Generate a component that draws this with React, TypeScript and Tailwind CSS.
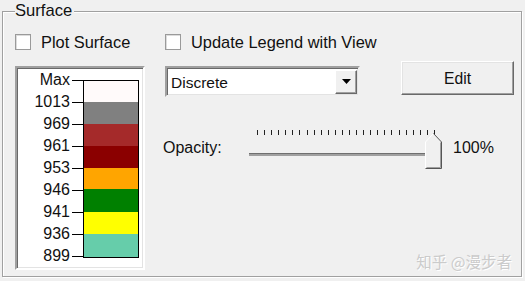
import React from "react";

const font = { fontFamily: '"Liberation Sans", Arial, sans-serif' };

// colour bands of the legend, top to bottom
const bands = [
  { h: "h-[21px]", c: "bg-[#fffafa]" },
  { h: "h-[22px]", c: "bg-[#808080]" },
  { h: "h-[22px]", c: "bg-[#a52a2a]" },
  { h: "h-[22px]", c: "bg-[#8b0000]" },
  { h: "h-[21px]", c: "bg-[#ffa500]" },
  { h: "h-[23px]", c: "bg-[#008000]" },
  { h: "h-[22px]", c: "bg-[#ffff00]" },
  { h: "h-[23px]", c: "bg-[#66cdaa]" },
];

const labels = ["Max", "1013", "969", "961", "953", "946", "941", "936", "899"];

function CheckBox({ label, className = "" }: { label: string; className?: string }) {
  return (
    <label className={`flex items-center h-[16px] ${className}`}>
      <span className="w-[16px] h-[16px] bg-white border border-[#9a9a9a] shadow-[inset_1px_1px_0_#dcdcdc]" />
      <span className="ml-[10px] text-[16.4px] leading-none text-[#111]">{label}</span>
    </label>
  );
}

function Legend() {
  return (
    <div className="mt-[5px] w-[130px] h-[204px] border-2 border-t-[#a0a0a0] border-l-[#a0a0a0] border-r-white border-b-white shadow-[inset_1px_1px_0_#696969,inset_-1px_-1px_0_#e3e3e3] bg-white flex">
      <div className="w-[66px] pt-[1px] flex flex-col">
        {labels.map((l) => (
          <div key={l} className="h-[22px] flex items-center justify-end">
            <span className="text-[16px] leading-none text-[#111]">{l}</span>
            <span className="ml-[2px] w-[11px] h-px bg-black" />
          </div>
        ))}
      </div>
      <div className="pt-[12px]">
        <div className="w-[56px] border border-black flex flex-col">
          {bands.map((b, i) => (
            <div key={i} className={`${b.h} ${b.c}`} />
          ))}
        </div>
      </div>
    </div>
  );
}

function Dropdown() {
  return (
    <div className="mt-[5px] ml-[2px] w-[195px] h-[31px] bg-white border-2 border-t-[#a0a0a0] border-l-[#a0a0a0] border-r-[#f0f0f0] border-b-[#f0f0f0] shadow-[inset_1px_1px_0_#696969,inset_-1px_-1px_0_#e3e3e3] flex items-center pl-[4px] pr-[1px]">
      <span className="flex-1 mt-[3px] text-[15.5px] leading-none text-[#111]">Discrete</span>
      <span className="w-[22px] h-[24px] bg-[#f0f0f0] border border-t-white border-l-white border-r-[#696969] border-b-[#696969] shadow-[inset_-1px_-1px_0_#a0a0a0] flex items-center justify-center">
        <svg width="9" height="5" viewBox="0 0 9 5">
          <path d="M0 0h9L4.5 5z" fill="#000" />
        </svg>
      </span>
    </div>
  );
}

function Slider() {
  return (
    <div className="relative w-[193px] h-[41px]">
      <div className="ml-[8px] mt-[1px] w-[178px] flex justify-between items-start">
        {Array.from({ length: 26 }).map((_, i) => (
          <span key={i} className={`w-px bg-[#222] ${i === 25 ? "h-[7px]" : "h-[5px]"}`} />
        ))}
      </div>
      <div className="mt-[16px] w-[179px] h-[3px] bg-[#a0a0a0] border-t border-[#6f6f6f] border-b-white" />
      <svg className="absolute left-[176px] top-[3px]" width="18" height="38" viewBox="0 0 18 38">
        <path d="M0.5 10L8.5 1.5L16.5 10V36.5H0.5Z" fill="#f0f0f0" />
        <path d="M0.5 36V10L8.5 1.5" fill="none" stroke="#ffffff" />
        <path d="M8.5 1.5L16.5 10V36.5H0.5" fill="none" stroke="#555" />
        <path d="M15.5 10.5V35.5H1.5" fill="none" stroke="#a0a0a0" />
      </svg>
    </div>
  );
}

export default function App() {
  return (
    <div className="w-[525px] h-[281px] bg-[#f0f0f0] pt-[11px] pl-[2px] overflow-hidden" style={font}>
      <div className="relative w-[520px] h-[266px] border border-[#a0a0a0] shadow-[inset_1px_1px_0_#fff,1px_1px_0_#fff] pl-[12px] pt-[22px]">
        <span className="absolute left-[12px] -top-[11px] bg-[#f0f0f0] text-[16.6px] leading-[20px] text-[#111] pr-[2px]">
          Surface
        </span>

        <div className="flex">
          <CheckBox label="Plot Surface" className="w-[150px]" />
          <CheckBox label="Update Legend with View" />
        </div>

        <div className="mt-[11px] flex items-start">
          <Legend />

          <div className="ml-[18px] flex flex-col">
            <div className="flex items-start">
              <Dropdown />
              <button className="ml-[41px] w-[113px] h-[34px] pt-[2px] bg-[#f0f0f0] border border-t-white border-l-white border-r-[#696969] border-b-[#696969] shadow-[inset_-1px_-1px_0_#a0a0a0,inset_1px_1px_0_#e3e3e3] text-[15.7px] leading-none text-[#111]">
                Edit
              </button>
            </div>

            <div className="mt-[32px] flex items-start">
              <span className="w-[86px] mt-[9px] text-[16px] leading-[20px] text-[#111]">Opacity:</span>
              <Slider />
              <span className="ml-[11px] mt-[9px] text-[16px] leading-[20px] text-[#111]">100%</span>
            </div>
          </div>
        </div>

        <span
          className="absolute right-[9px] bottom-[7px] text-[15.5px] leading-none text-[#cbcbcb] [text-shadow:1px_1px_0_#fff]"
          style={{ fontFamily: '"Noto Sans CJK SC", "Liberation Sans", sans-serif' }}
        >
          知乎 @漫步者
        </span>
      </div>
    </div>
  );
}
